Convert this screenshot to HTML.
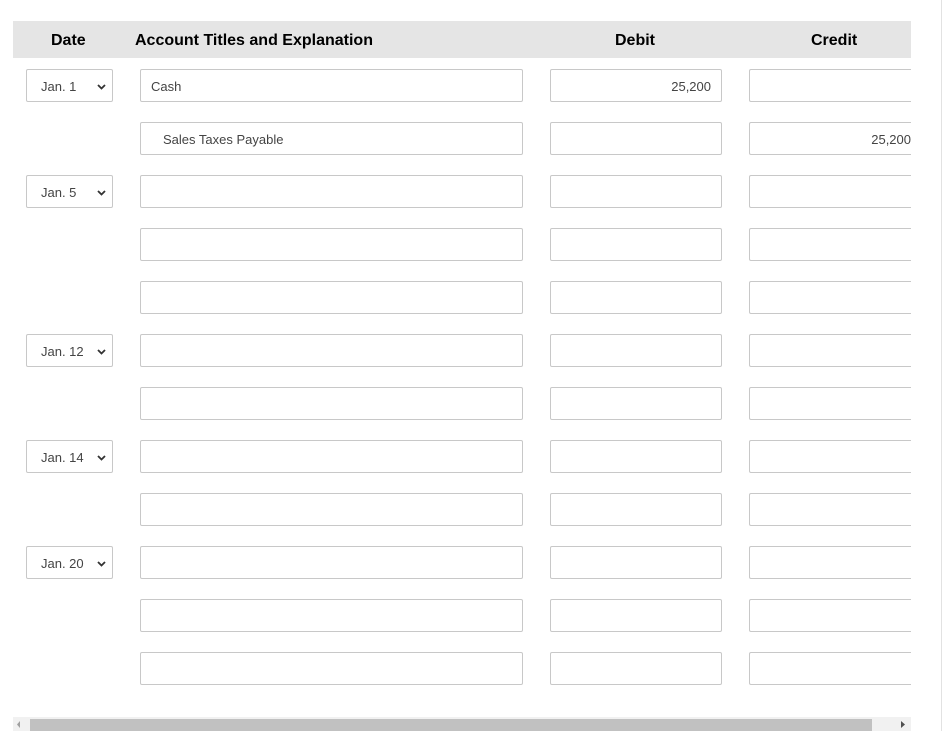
<!DOCTYPE html>
<html><head><meta charset="utf-8"><style>
body{margin:0;width:947px;height:731px;background:#fff;position:relative;overflow:hidden;font-family:"Liberation Sans",sans-serif;}
.hdr{position:absolute;left:13px;top:21px;width:898px;height:37px;background:#e5e5e5;}
.h{position:absolute;top:32px;font-weight:bold;font-size:16px;color:#000;}
.box{position:absolute;height:31px;border:1px solid #c8c8c8;border-radius:2px;background:#fff;box-sizing:content-box;font-size:13px;color:#444;line-height:33px;}
.sel{left:26px;width:85px;}
.sel span{position:absolute;left:14px;}
.sel svg{position:absolute;right:6px;top:14px;}
.acc{left:140px;width:381px;}
.deb{left:550px;width:170px;text-align:right;}
.cre{left:749px;width:161px;border-right:none;border-radius:2px 0 0 2px;text-align:right;}
.vline{position:absolute;left:941px;top:0;width:1px;height:731px;background:#e2e2e2;}
.track{position:absolute;left:13px;top:717px;width:898px;height:14px;background:#f1f1f1;}
.thumb{position:absolute;left:30px;top:719px;width:842px;height:12px;background:#c1c1c1;}
</style></head><body>
<div class="vline"></div>
<div class="hdr"></div>
<div class="h" style="left:51px">Date</div>
<div class="h" style="left:135px">Account Titles and Explanation</div>
<div class="h" style="left:615px">Debit</div>
<div class="h" style="left:811px">Credit</div>

<div class="box sel" style="top:69px"><span>Jan. 1</span><svg width="9" height="6" viewBox="0 0 9 6"><path d="M1 1l3.5 3.5L8 1" stroke="#333" stroke-width="1.8" fill="none"/></svg></div>
<div class="box acc" style="top:69px"><span style="margin-left:10px">Cash</span></div>
<div class="box deb" style="top:69px"><span style="margin-right:10px">25,200</span></div>
<div class="box cre" style="top:69px"></div>

<div class="box acc" style="top:122px"><span style="margin-left:22px">Sales Taxes Payable</span></div>
<div class="box deb" style="top:122px"></div>
<div class="box cre" style="top:122px"><span>25,200</span></div>

<div class="box sel" style="top:175px"><span>Jan. 5</span><svg width="9" height="6" viewBox="0 0 9 6"><path d="M1 1l3.5 3.5L8 1" stroke="#333" stroke-width="1.8" fill="none"/></svg></div>
<div class="box acc" style="top:175px"></div><div class="box deb" style="top:175px"></div><div class="box cre" style="top:175px"></div>

<div class="box acc" style="top:228px"></div><div class="box deb" style="top:228px"></div><div class="box cre" style="top:228px"></div>
<div class="box acc" style="top:281px"></div><div class="box deb" style="top:281px"></div><div class="box cre" style="top:281px"></div>

<div class="box sel" style="top:334px"><span>Jan. 12</span><svg width="9" height="6" viewBox="0 0 9 6"><path d="M1 1l3.5 3.5L8 1" stroke="#333" stroke-width="1.8" fill="none"/></svg></div>
<div class="box acc" style="top:334px"></div><div class="box deb" style="top:334px"></div><div class="box cre" style="top:334px"></div>
<div class="box acc" style="top:387px"></div><div class="box deb" style="top:387px"></div><div class="box cre" style="top:387px"></div>

<div class="box sel" style="top:440px"><span>Jan. 14</span><svg width="9" height="6" viewBox="0 0 9 6"><path d="M1 1l3.5 3.5L8 1" stroke="#333" stroke-width="1.8" fill="none"/></svg></div>
<div class="box acc" style="top:440px"></div><div class="box deb" style="top:440px"></div><div class="box cre" style="top:440px"></div>
<div class="box acc" style="top:493px"></div><div class="box deb" style="top:493px"></div><div class="box cre" style="top:493px"></div>

<div class="box sel" style="top:546px"><span>Jan. 20</span><svg width="9" height="6" viewBox="0 0 9 6"><path d="M1 1l3.5 3.5L8 1" stroke="#333" stroke-width="1.8" fill="none"/></svg></div>
<div class="box acc" style="top:546px"></div><div class="box deb" style="top:546px"></div><div class="box cre" style="top:546px"></div>
<div class="box acc" style="top:599px"></div><div class="box deb" style="top:599px"></div><div class="box cre" style="top:599px"></div>
<div class="box acc" style="top:652px"></div><div class="box deb" style="top:652px"></div><div class="box cre" style="top:652px"></div>

<div class="track"></div>
<div class="thumb"></div>
<svg style="position:absolute;left:17px;top:721px" width="4" height="7"><path d="M3 0L0 3.5L3 7z" fill="#a0a0a0"/></svg>
<svg style="position:absolute;left:901px;top:721px" width="4" height="7"><path d="M0 0L4 3.5L0 7z" fill="#505050"/></svg>
</body></html>
